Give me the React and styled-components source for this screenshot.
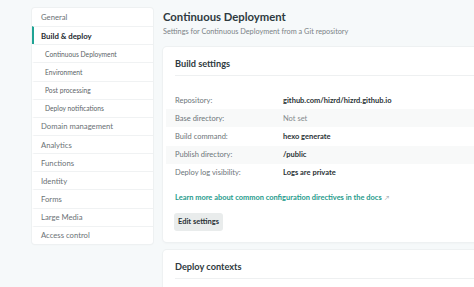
import React from "react";
import styled, { createGlobalStyle } from "styled-components";

const Global = createGlobalStyle`
  html, body { margin: 0; padding: 0; }
  body {
    background: #f6f9fa;
    font-family: Lato, "Open Sans", sans-serif;
    overflow: hidden;
    width: 474px;
    height: 287px;
  }
`;

const Page = styled.div`
  display: grid;
  grid-template-columns: 121px 340px;
  column-gap: 10px;
  padding: 8px 0 0 32px;
  align-items: start;
`;

const Nav = styled.nav`
  background: #fff;
  border-radius: 3px;
  box-shadow: 0 0 0 1px #eef1f2, 0 1px 2px rgba(0,0,0,0.04);
  display: flex;
  flex-direction: column;
  overflow: hidden;
`;

const NavItem = styled.div`
  height: 18.15px;
  box-sizing: border-box;
  display: flex;
  align-items: center;
  padding-left: ${p => (p.$sub ? 11 : 7)}px;
  border-top: ${p => (p.$first ? "none" : "1px solid #f0f2f3")};
  border-left: 2px solid ${p => (p.$active ? "#20a394" : "transparent")};
  font-size: ${p => (p.$sub ? 6.7 : p.$active ? 7.8 : 7.7)}px;
  font-weight: ${p => (p.$active ? 700 : 400)};
  color: ${p => (p.$active ? "#1e2a30" : p.$sub ? "#5d6468" : "#6b7276")};
  white-space: nowrap;
`;

const Main = styled.main`
  display: flex;
  flex-direction: column;
`;

const Title = styled.h1`
  margin: 1px 0 0 0;
  font-size: 11.3px;
  line-height: 16px;
  font-weight: 700;
  color: #2e3a40;
`;

const Subtitle = styled.p`
  margin: 2px 0 0 0;
  font-size: 7.3px;
  line-height: 10px;
  color: #7b8387;
`;

const Card = styled.section`
  background: #fff;
  border-radius: 4px;
  box-shadow: 0 0 0 1px #eef1f2, 0 1px 3px rgba(0,0,0,0.05);
  margin-top: ${p => p.$mt}px;
  padding: 0 0 ${p => p.$pb}px 0;
`;

const CardHeader = styled.h2`
  margin: 0 0 0 12px;
  padding: 10px 0 4px 0;
  font-size: 9.2px;
  line-height: 14px;
  font-weight: 700;
  color: #2e3a40;
  border-bottom: 1px solid #eef0f1;
`;

const Rows = styled.div`
  margin: 15px 0 0 3px;
  display: flex;
  flex-direction: column;
`;

const Row = styled.div`
  display: grid;
  grid-template-columns: 108px 1fr;
  height: 18.2px;
  align-items: center;
  padding-left: 9px;
  background: ${p => (p.$shade ? "#f8f9f9" : "transparent")};
  font-size: 7.5px;
  white-space: nowrap;
`;

const Label = styled.span`
  color: #6e7579;
`;

const Value = styled.span`
  color: ${p => (p.$muted ? "#858b8e" : "#2a3236")};
  font-weight: ${p => (p.$muted ? 400 : 700)};
`;

const DocLink = styled.a`
  display: block;
  margin: 10px 0 0 12px;
  font-size: 7.45px;
  line-height: 11px;
  font-weight: 700;
  color: #1f9b8c;
  text-decoration: none;
  white-space: nowrap;
`;

const Arrow = styled.span`
  color: #9aa3a6;
  font-size: 6px;
  margin-left: 3px;
  font-weight: 400;
`;

const Button = styled.button`
  margin: 10px 0 0 11px;
  height: 18px;
  width: 49px;
  padding: 0;
  border: none;
  border-radius: 3px;
  background: #e9ecec;
  color: #2a3236;
  font-family: inherit;
  font-size: 7.5px;
  font-weight: 700;
  display: block;
`;

const navItems = [
  { t: "General" },
  { t: "Build & deploy", active: true },
  { t: "Continuous Deployment", sub: true },
  { t: "Environment", sub: true },
  { t: "Post processing", sub: true },
  { t: "Deploy notifications", sub: true },
  { t: "Domain management" },
  { t: "Analytics" },
  { t: "Functions" },
  { t: "Identity" },
  { t: "Forms" },
  { t: "Large Media" },
  { t: "Access control" },
];

const rows = [
  ["Repository:", "github.com/hizrd/hizrd.github.io"],
  ["Base directory:", "Not set", true],
  ["Build command:", "hexo generate"],
  ["Publish directory:", "/public"],
  ["Deploy log visibility:", "Logs are private"],
];

export default function App() {
  return (
    <>
      <Global />
      <Page>
        <Nav>
          {navItems.map((n, i) => (
            <NavItem key={n.t} $first={i === 0} $sub={n.sub} $active={n.active}>
              {n.t}
            </NavItem>
          ))}
        </Nav>
        <Main>
          <Title>Continuous Deployment</Title>
          <Subtitle>Settings for Continuous Deployment from a Git repository</Subtitle>
          <Card $mt={10} $pb={11}>
            <CardHeader>Build settings</CardHeader>
            <Rows>
              {rows.map(([l, v, muted], i) => (
                <Row key={l} $shade={i === 1 || i === 3}>
                  <Label>{l}</Label>
                  <Value $muted={muted}>{v}</Value>
                </Row>
              ))}
            </Rows>
            <DocLink href="#">
              Learn more about common configuration directives in the docs<Arrow>↗</Arrow>
            </DocLink>
            <Button>Edit settings</Button>
          </Card>
          <Card $mt={8} $pb={20}>
            <CardHeader>Deploy contexts</CardHeader>
          </Card>
        </Main>
      </Page>
    </>
  );
}
